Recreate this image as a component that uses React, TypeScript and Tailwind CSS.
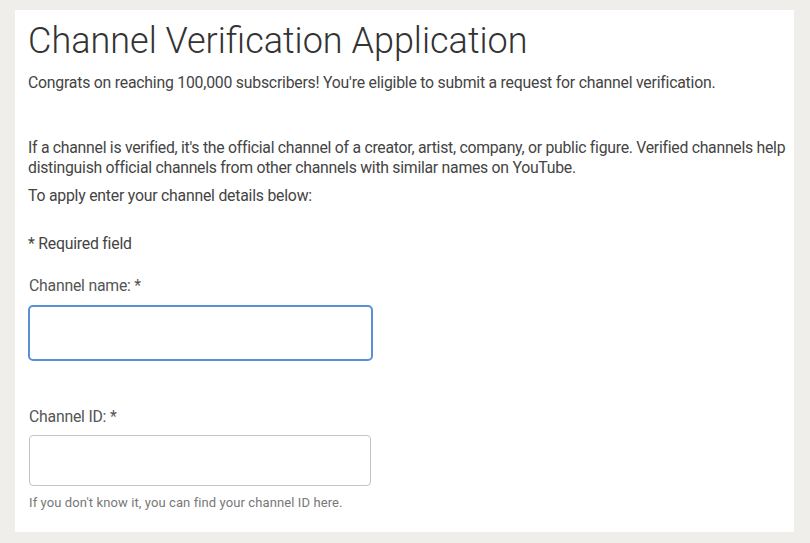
export default function App() {
  return (
    <div className="w-[810px] h-[543px] bg-[#f0eeea] pt-[10px] pl-[15px]" style={{ fontFamily: 'Roboto, "Liberation Sans", sans-serif' }}>
      <div className="w-[779px] h-[522px] bg-white pl-[13px]">
        <h1 className="pt-[11px] text-[36px] leading-[40px] text-[#333] font-light">Channel Verification Application</h1>
        <p className="mt-[12px] text-[15.8px] leading-[20px] text-[#444] tracking-[-0.22px]">
          Congrats on reaching 100,000 subscribers! You're eligible to submit a request for channel verification.
        </p>
        <p className="mt-[45px] text-[15.8px] leading-[20px] text-[#444] tracking-[-0.27px]">
          If a channel is verified, it's the official channel of a creator, artist, company, or public figure. Verified channels help distinguish official channels from other channels with similar names on YouTube.
        </p>
        <p className="mt-[8px] text-[15.8px] leading-[20px] text-[#444] tracking-[-0.22px]">To apply enter your channel details below:</p>
        <p className="mt-[28px] text-[15.8px] leading-[20px] text-[#444] tracking-[-0.22px]">* Required field</p>
        <p className="mt-[22px] text-[15.8px] leading-[20px] text-[#555] tracking-[-0.22px] pl-[1px]">Channel name: *</p>
        <div className="mt-[9px] w-[345px] h-[56px] rounded-[5px] border-2 border-[#5b8fd8]"></div>
        <p className="mt-[46px] text-[15.8px] leading-[20px] text-[#555] tracking-[-0.22px] pl-[1px]">Channel ID: *</p>
        <div className="mt-[8px] ml-[1px] w-[342px] h-[51px] rounded-[4px] border border-[#c4c4c4]"></div>
        <p className="mt-[9px] text-[13px] leading-[16px] text-[#777] tracking-[0.1px] pl-[1px]">If you don't know it, you can find your channel ID here.</p>
      </div>
    </div>
  );
}
